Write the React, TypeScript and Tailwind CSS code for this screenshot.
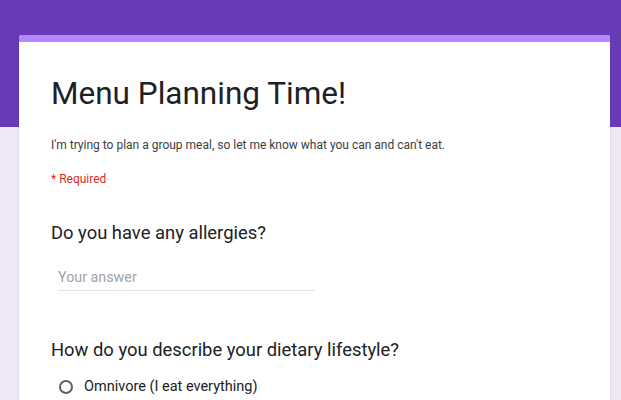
export default function App() {
  return (
    <div className="relative h-[400px] w-[621px] overflow-hidden bg-[#ede7f6] font-['Roboto',sans-serif] text-[#202124]">
      <div className="h-[127px] bg-[#673ab7]" />
      <div className="-mt-[92px] ml-[19px] w-[591px] rounded-t-[3px] bg-white pb-[40px] shadow-[0_1px_2px_rgba(0,0,0,0.2)]">
        <div className="h-[7px] rounded-t-[3px] bg-[#b388ff]" />
        <div className="px-[32px] pt-[32px]">
          <h1 className="text-[31.5px] leading-[40px] font-normal">Menu Planning Time!</h1>
          <p className="mt-[22px] text-[12px] leading-[18px] text-[#3c4043]">
            I'm trying to plan a group meal, so let me know what you can and can't eat.
          </p>
          <p className="mt-[16px] text-[12px] leading-[18px] text-[#d93025]">* Required</p>

          <div className="mt-[33px]">
            <h2 className="text-[18.4px] leading-[24px]">Do you have any allergies?</h2>
            <div className="mt-[20px] ml-[7px] w-[257px] border-b border-[#e0e0e0] pb-[1px]">
              <input
                type="text"
                placeholder="Your answer"
                className="w-full bg-transparent text-[14.3px] leading-[20px] text-[#202124] outline-none placeholder:text-[#a0a3ab]"
              />
            </div>
          </div>

          <div className="mt-[47px]">
            <h2 className="text-[18.4px] leading-[24px]">How do you describe your dietary lifestyle?</h2>
            <label className="mt-[15px] ml-[8px] flex items-center gap-[11px]">
              <span className="h-[14px] w-[14px] rounded-full border-2 border-[#5f6368]" />
              <span className="text-[14.5px] leading-[20px] text-[#202124]">Omnivore (I eat everything)</span>
            </label>
          </div>
        </div>
      </div>
    </div>
  );
}
